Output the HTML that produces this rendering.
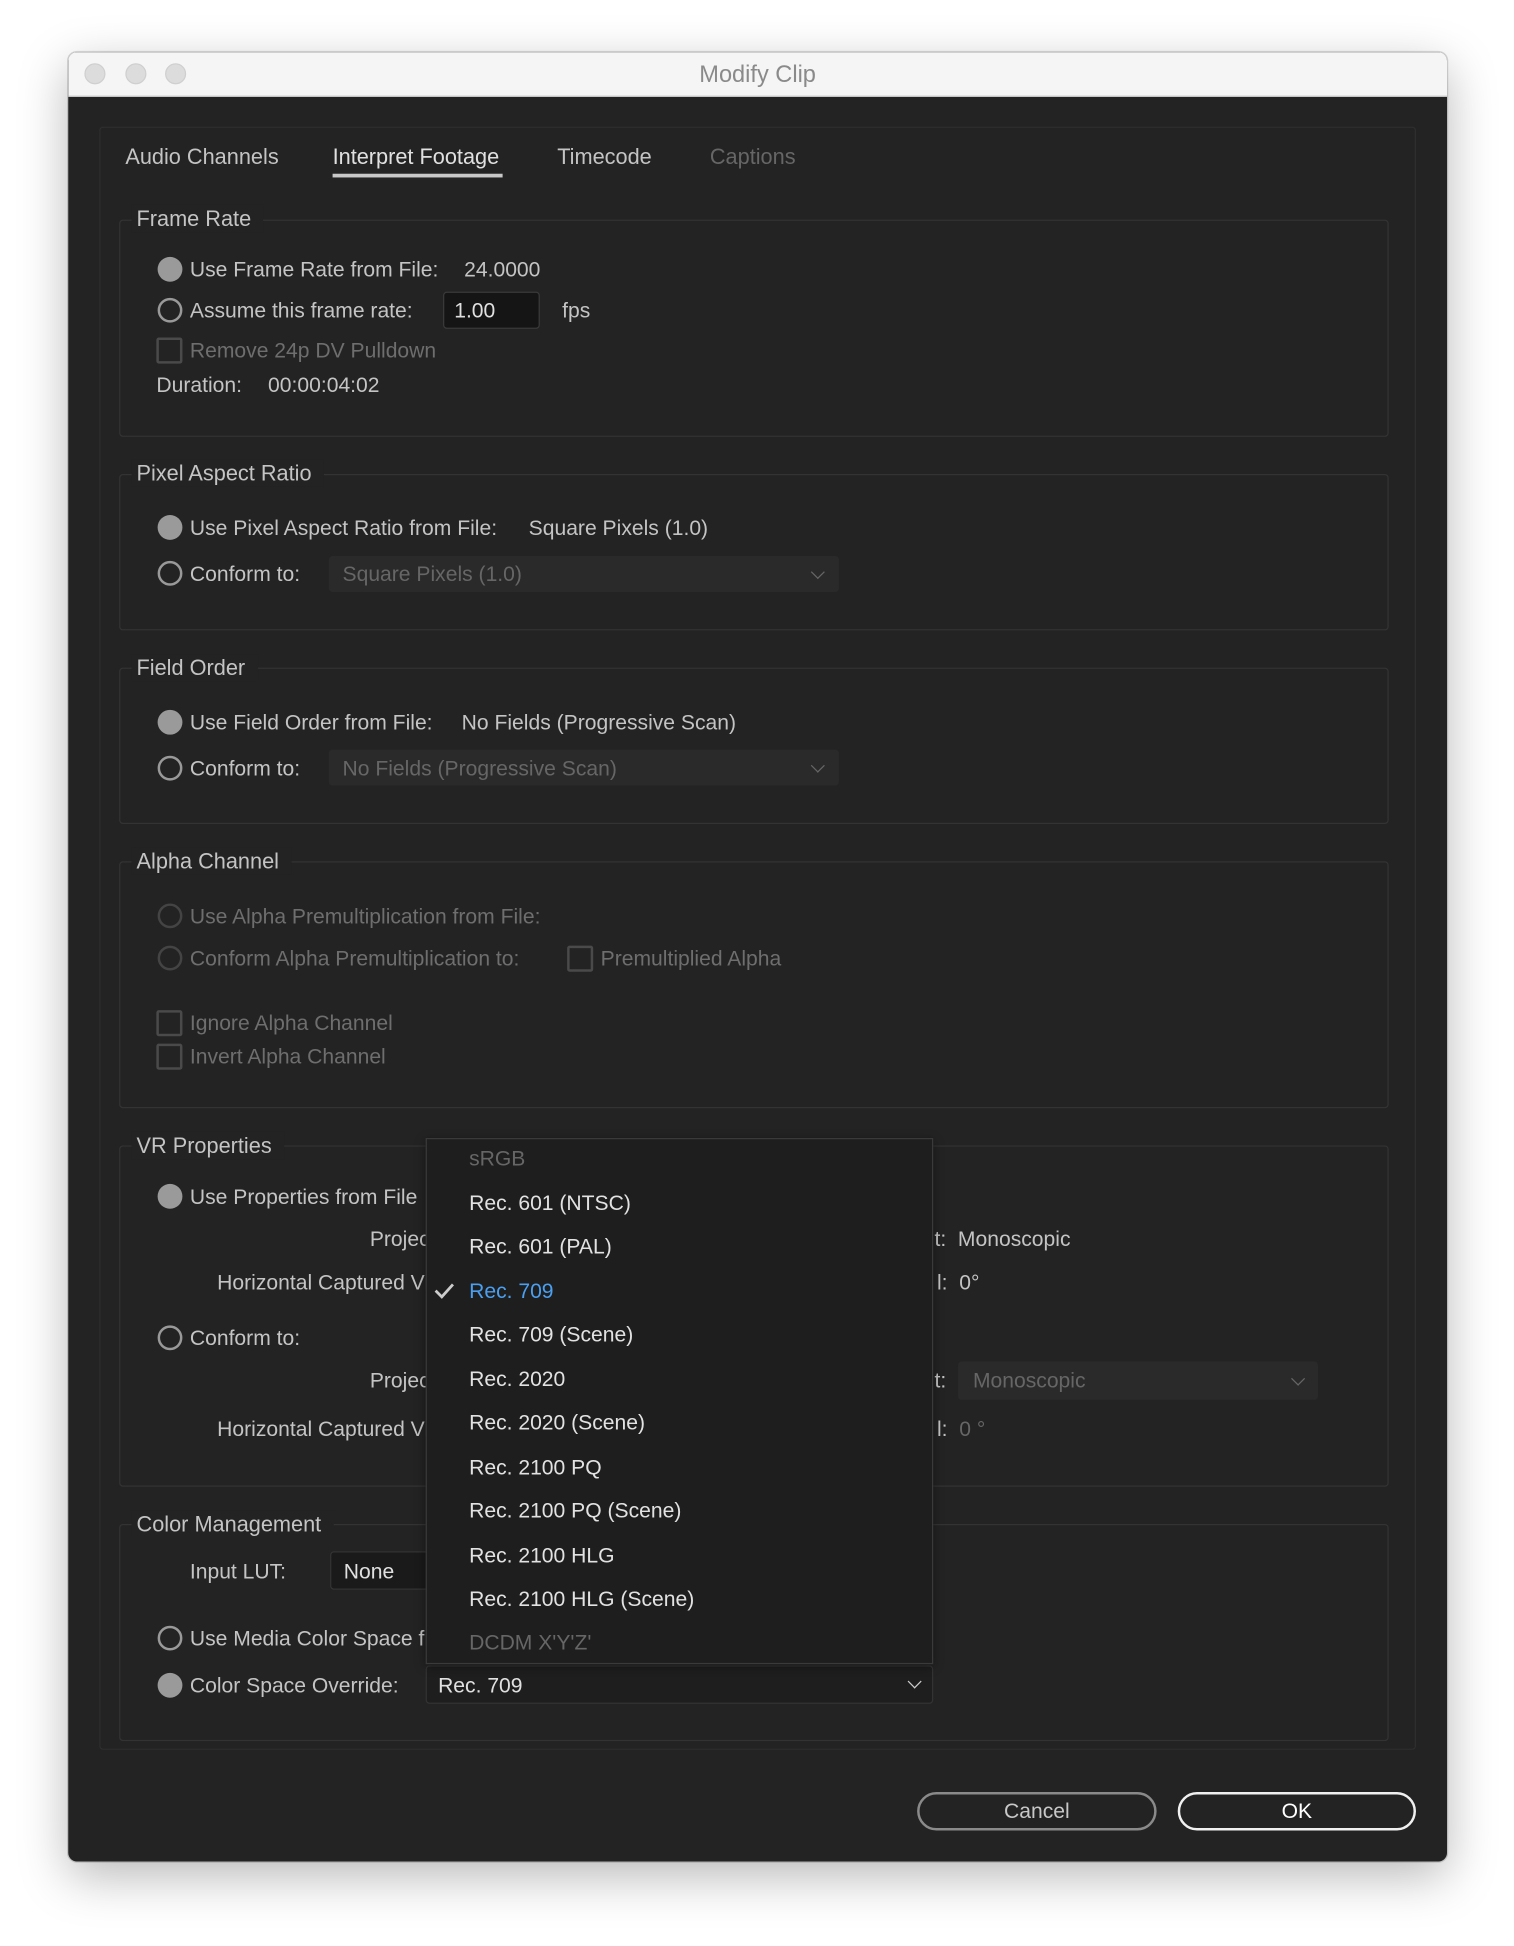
<!DOCTYPE html>
<html><head><meta charset="utf-8"><style>
html,body{margin:0;padding:0;background:#fff;width:1514px;height:1944px;overflow:hidden}
#s{position:absolute;left:0;top:0;width:1220px;height:1568px;transform:scale(1.241);transform-origin:0 0;font-family:"Liberation Sans",sans-serif;font-size:17px;color:#c4c4c4}
.a{position:absolute;white-space:nowrap;line-height:22px;padding-top:1px}
.win{position:absolute;left:55px;top:42px;width:1111px;height:1458px;border-radius:7px;background:#232323;box-shadow:0 12px 40px rgba(0,0,0,.28),0 0 0 1px rgba(0,0,0,.15);overflow:hidden}
.tb{position:absolute;left:0;top:0;width:100%;height:35px;background:#f5f5f5;border-bottom:1px solid #cfcfcf}
.tl{position:absolute;top:9px;width:17px;height:17px;border-radius:50%;background:#dcdcdc;border:1px solid #cfcfcf;box-sizing:border-box}
.box{position:absolute;border:1.5px solid #333;border-radius:3px}
.leg{position:absolute;background:#232323;padding:0 10px 0 4px;line-height:22px;color:#c4c4c4;font-size:17.5px}
.rf{position:absolute;width:20px;height:20px;border-radius:50%;background:#9a9a9a}
.ro{position:absolute;width:16px;height:16px;border-radius:50%;border:2.5px solid #999}
.rd{position:absolute;width:16px;height:16px;border-radius:50%;border:2.5px solid #444}
.cb{position:absolute;width:17px;height:17px;border:2px solid #4a4a4a;border-radius:2px}
.dis{color:#6e6e6e}
.dd{position:absolute;background:#2a2a2a;border-radius:3px}
.chev{position:absolute;width:7px;height:7px;border-right:1.5px solid #666;border-bottom:1.5px solid #666;transform:rotate(45deg)}
</style></head><body><div id="s">
<div class="win">
 <div class="tb">
  <div class="tl" style="left:13px"></div><div class="tl" style="left:46px"></div><div class="tl" style="left:78px"></div>
  <div class="a" style="left:0;width:100%;text-align:center;top:7px;color:#8a8a8a;font-size:19px">Modify Clip</div>
 </div>
</div>
<div class="box" style="left:80px;top:102px;width:1059px;height:1306px;border-color:#2e2e2e"></div>
<div class="a" style="left:101px;top:114px;font-size:17.5px">Audio Channels</div>
<div class="a" style="left:268px;top:114px;font-size:17.5px;color:#e0e0e0">Interpret Footage</div>
<div style="position:absolute;left:268px;top:140px;width:137px;height:3px;background:#c8c8c8"></div>
<div class="a" style="left:449px;top:114px;font-size:17.5px">Timecode</div>
<div class="a" style="left:572px;top:114px;font-size:17.5px;color:#666">Captions</div>

<div class="box" style="left:96px;top:177px;width:1021px;height:173px"></div>
<div class="leg" style="left:106px;top:165px">Frame Rate</div>
<div class="rf" style="left:127px;top:207px"></div>
<div class="a" style="left:153px;top:206px">Use Frame Rate from File:</div>
<div class="a" style="left:374px;top:206px">24.0000</div>
<div class="ro" style="left:127px;top:240px"></div>
<div class="a" style="left:153px;top:239px">Assume this frame rate:</div>
<div style="position:absolute;left:357px;top:235px;width:78px;height:30px;background:#151515;border:1px solid #3a3a3a;border-radius:3px;box-sizing:border-box"></div>
<div class="a" style="left:366px;top:239px;color:#e0e0e0">1.00</div>
<div class="a" style="left:453px;top:239px">fps</div>
<div class="cb" style="left:126px;top:272px"></div>
<div class="a dis" style="left:153px;top:271px">Remove 24p DV Pulldown</div>
<div class="a" style="left:126px;top:299px">Duration:</div>
<div class="a" style="left:216px;top:299px">00:00:04:02</div>

<div class="box" style="left:96px;top:382px;width:1021px;height:124px"></div>
<div class="leg" style="left:106px;top:370px">Pixel Aspect Ratio</div>
<div class="rf" style="left:127px;top:415px"></div>
<div class="a" style="left:153px;top:414px">Use Pixel Aspect Ratio from File:</div>
<div class="a" style="left:426px;top:414px">Square Pixels (1.0)</div>
<div class="ro" style="left:127px;top:452px"></div>
<div class="a" style="left:153px;top:451px">Conform to:</div>
<div class="dd" style="left:265px;top:448px;width:411px;height:29px"></div>
<div class="a dis" style="left:276px;top:451px;color:#666">Square Pixels (1.0)</div>
<div class="chev" style="left:655px;top:457px"></div>

<div class="box" style="left:96px;top:538px;width:1021px;height:124px"></div>
<div class="leg" style="left:106px;top:527px">Field Order</div>
<div class="rf" style="left:127px;top:572px"></div>
<div class="a" style="left:153px;top:571px">Use Field Order from File:</div>
<div class="a" style="left:372px;top:571px">No Fields (Progressive Scan)</div>
<div class="ro" style="left:127px;top:609px"></div>
<div class="a" style="left:153px;top:608px">Conform to:</div>
<div class="dd" style="left:265px;top:604px;width:411px;height:29px"></div>
<div class="a" style="left:276px;top:608px;color:#666">No Fields (Progressive Scan)</div>
<div class="chev" style="left:655px;top:613px"></div>

<div class="box" style="left:96px;top:694px;width:1021px;height:197px"></div>
<div class="leg" style="left:106px;top:683px">Alpha Channel</div>
<div class="rd" style="left:127px;top:728px"></div>
<div class="a dis" style="left:153px;top:727px">Use Alpha Premultiplication from File:</div>
<div class="rd" style="left:127px;top:762px"></div>
<div class="a dis" style="left:153px;top:761px">Conform Alpha Premultiplication to:</div>
<div class="cb" style="left:457px;top:762px"></div>
<div class="a dis" style="left:484px;top:761px">Premultiplied Alpha</div>
<div class="cb" style="left:126px;top:814px"></div>
<div class="a dis" style="left:153px;top:813px">Ignore Alpha Channel</div>
<div class="cb" style="left:126px;top:841px"></div>
<div class="a dis" style="left:153px;top:840px">Invert Alpha Channel</div>

<div class="box" style="left:96px;top:923px;width:1021px;height:273px"></div>
<div class="leg" style="left:106px;top:912px">VR Properties</div>
<div class="rf" style="left:127px;top:954px"></div>
<div class="a" style="left:153px;top:953px">Use Properties from File</div>
<div class="a" style="left:298px;top:987px">Projection</div>
<div class="a" style="left:175px;top:1022px">Horizontal Captured View</div>
<div class="ro" style="left:127px;top:1068px"></div>
<div class="a" style="left:153px;top:1067px">Conform to:</div>
<div class="a" style="left:298px;top:1101px">Projection</div>
<div class="a" style="left:175px;top:1140px">Horizontal Captured View</div>
<div class="a" style="left:753px;top:987px">t:&nbsp; Monoscopic</div>
<div class="a" style="left:755px;top:1022px">l:&nbsp; 0°</div>
<div class="a" style="left:753px;top:1101px">t:</div>
<div class="dd" style="left:772px;top:1097px;width:290px;height:31px"></div>
<div class="a" style="left:784px;top:1101px;color:#666">Monoscopic</div>
<div class="chev" style="left:1042px;top:1107px"></div>
<div class="a" style="left:755px;top:1140px">l:&nbsp; <span style="color:#666">0 °</span></div>

<div class="box" style="left:96px;top:1228px;width:1021px;height:173px"></div>
<div class="leg" style="left:106px;top:1217px">Color Management</div>
<div class="a" style="left:153px;top:1255px">Input LUT:</div>
<div style="position:absolute;left:266px;top:1250px;width:120px;height:31px;background:#1a1a1a;border:1px solid #333;border-radius:3px;box-sizing:border-box"></div>
<div class="a" style="left:277px;top:1255px;color:#e0e0e0">None</div>
<div class="ro" style="left:127px;top:1310px"></div>
<div class="a" style="left:153px;top:1309px">Use Media Color Space from File</div>
<div class="rf" style="left:127px;top:1348px"></div>
<div class="a" style="left:153px;top:1347px">Color Space Override:</div>
<div style="position:absolute;left:343px;top:1342px;width:409px;height:31px;background:#1e1e1e;border:1px solid #333;border-radius:3px;box-sizing:border-box"></div>
<div class="a" style="left:353px;top:1347px;color:#e0e0e0">Rec. 709</div>
<div class="chev" style="left:733px;top:1351px;border-color:#ccc"></div>

<div style="position:absolute;left:343px;top:917px;width:409px;height:424px;background:#1e1e1e;border:1px solid #3a3a3a;box-sizing:border-box;box-shadow:0 2px 8px rgba(0,0,0,.4)"></div>
<div class="a" style="left:378px;top:922px;color:#666">sRGB</div>
<div class="a" style="left:378px;top:958px;color:#e2e2e2">Rec. 601 (NTSC)</div>
<div class="a" style="left:378px;top:993px;color:#e2e2e2">Rec. 601 (PAL)</div>
<svg style="position:absolute;left:349px;top:1032px" width="18" height="16"><path d="M2 8 L7 13 L16 3" stroke="#ccc" stroke-width="2.2" fill="none"/></svg>
<div class="a" style="left:378px;top:1029px;color:#4a9ff0">Rec. 709</div>
<div class="a" style="left:378px;top:1064px;color:#e2e2e2">Rec. 709 (Scene)</div>
<div class="a" style="left:378px;top:1100px;color:#e2e2e2">Rec. 2020</div>
<div class="a" style="left:378px;top:1135px;color:#e2e2e2">Rec. 2020 (Scene)</div>
<div class="a" style="left:378px;top:1171px;color:#e2e2e2">Rec. 2100 PQ</div>
<div class="a" style="left:378px;top:1206px;color:#e2e2e2">Rec. 2100 PQ (Scene)</div>
<div class="a" style="left:378px;top:1242px;color:#e2e2e2">Rec. 2100 HLG</div>
<div class="a" style="left:378px;top:1277px;color:#e2e2e2">Rec. 2100 HLG (Scene)</div>
<div class="a" style="left:378px;top:1312px;color:#666">DCDM X'Y'Z'</div>

<div style="position:absolute;left:739px;top:1444px;width:193px;height:31px;border:2px solid #8a8a8a;border-radius:16px;box-sizing:border-box"></div>
<div class="a" style="left:739px;width:193px;text-align:center;top:1448px;color:#c8c8c8;font-size:17px">Cancel</div>
<div style="position:absolute;left:949px;top:1444px;width:192px;height:31px;border:2px solid #f0f0f0;border-radius:16px;box-sizing:border-box"></div>
<div class="a" style="left:949px;width:192px;text-align:center;top:1448px;color:#fff;font-size:17px">OK</div>
</div></body></html>
